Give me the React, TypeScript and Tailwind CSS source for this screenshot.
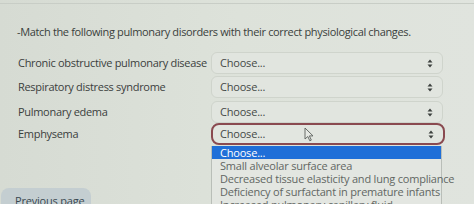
import React from 'react';

const rows = [
  { label: 'Chronic obstructive pulmonary disease', mt: 'mt-[12px]' },
  { label: 'Respiratory distress syndrome', mt: 'mt-[2px]' },
  { label: 'Pulmonary edema', mt: 'mt-[3px]' },
  { label: 'Emphysema', mt: 'mt-[0px]', focused: true },
];

const options = [
  'Choose...',
  'Small alveolar surface area',
  'Decreased tissue elasticity and lung compliance',
  'Deficiency of surfactant in premature infants',
  'Increased pulmonary capillary fluid',
];

function Arrows() {
  return (
    <svg width="6" height="9" viewBox="0 0 6 9" className="text-[#3c413e]">
      <path d="M3 0.5 L5.5 3.5 H0.5 Z" fill="currentColor" />
      <path d="M3 8.5 L5.5 5.5 H0.5 Z" fill="currentColor" />
    </svg>
  );
}

function SelectBox({ focused }: { focused?: boolean }) {
  return (
    <div
      className={
        focused
          ? 'relative flex h-[22px] w-[234px] shrink-0 items-center justify-between rounded-[8px] border-2 border-[#8a4a50] bg-[#e2e6e0] pl-[7px] pr-[9px]'
          : 'flex h-[22px] w-[232px] shrink-0 items-center justify-between rounded-[6px] border border-[#cfd4cc] bg-[#e1e5df] pl-[8px] pr-[9px]'
      }
    >
      <span className="text-[11px] tracking-[-0.2px] text-[#444946]">Choose...</span>
      <Arrows />
      {focused && (
        <svg
          width="10"
          height="15"
          viewBox="0 0 10 15"
          className="absolute left-[91px] top-[2px]"
        >
          <path
            d="M1 1 L1 12 L3.8 9.5 L5.8 13.8 L7.3 13.1 L5.4 8.9 L9 8.9 Z"
            fill="#e6e9e4"
            stroke="#5b605c"
            strokeWidth="0.9"
            strokeLinejoin="round"
          />
        </svg>
      )}
    </div>
  );
}

export default function App() {
  return (
    <div
      className="relative h-[204px] w-[474px] overflow-hidden bg-gradient-to-r from-[#d6dbd3] via-[#dde2da] to-[#e0e4de] text-[#3b403d]"
      style={{ fontFamily: '"Open Sans", "Noto Sans", sans-serif' }}
    >
      <div className="mt-[3px] border-t border-[#c8cdc6]" />
      <p className="ml-[17px] mt-[19px] text-[11px] leading-[17px] tracking-[-0.35px] whitespace-nowrap text-[#3a3f3c]">
        -Match the following pulmonary disorders with their correct physiological changes.
      </p>
      <div className="flex flex-col">
        {rows.map((r) => (
          <div key={r.label} className={`flex items-center ${r.mt}`}>
            <span className="w-[211px] shrink-0 pl-[18px] text-[11px] tracking-[-0.3px] whitespace-nowrap">
              {r.label}
            </span>
            <SelectBox focused={r.focused} />
          </div>
        ))}
      </div>
      <div className="ml-[1px] mt-[43px] h-[24px] w-[90px] rounded-t-[8px] bg-[#c4ced1] pl-[14px] pt-[5px] text-[11px] leading-[16px] tracking-[-0.2px] text-[#3a4850]">
        Previous page
      </div>
      <div className="absolute left-[211px] top-[146px] w-[231px] border-x border-[#b9beb8] bg-[#e3e6e1] text-[11px] tracking-[-0.2px] whitespace-nowrap">
        {options.map((o, i) => (
          <div
            key={o}
            className={
              i === 0
                ? 'h-[13px] bg-[#1f6fd8] px-[8px] leading-[13px] text-white'
                : 'h-[13px] px-[8px] leading-[13px] text-[#626763]'
            }
          >
            {o}
          </div>
        ))}
      </div>
    </div>
  );
}
